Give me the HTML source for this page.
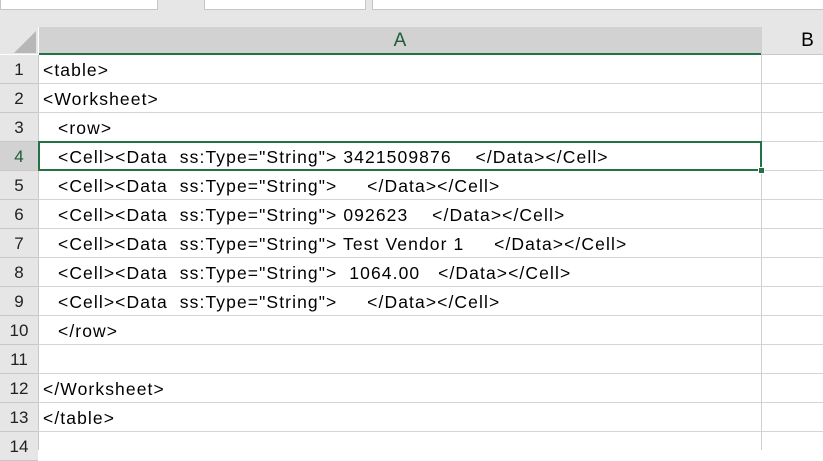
<!DOCTYPE html><html><head><style>
body{margin:0;width:823px;height:450px;overflow:hidden;background:#fff;font-family:"Liberation Sans",Calibri,sans-serif;position:relative}
div{position:absolute;box-sizing:border-box}
.t{font-size:17.5px;letter-spacing:1.1px;color:#000;white-space:pre;line-height:29px}
.rn{left:0;width:38px;text-align:center;font-size:17px;line-height:29px;color:#222;background:#e6e6e6;border-bottom:1px solid #c8c8c8}
.hl{left:38px;width:785px;height:1px;background:#d4d4d4}
</style></head><body>
<div style="left:0;top:0;width:823px;height:27px;background:#e6e6e6"></div>
<div style="left:0;top:-2px;width:158px;height:12px;background:#fff;border:1px solid #c6c6c6"></div>
<div style="left:204px;top:-2px;width:162px;height:12px;background:#fff;border:1px solid #c6c6c6"></div>
<div style="left:372px;top:-2px;width:460px;height:12px;background:#fff;border:1px solid #c6c6c6"></div>
<div style="left:0;top:27px;width:38px;height:27px;background:#e6e6e6"></div>
<svg style="position:absolute;left:14px;top:31px" width="22" height="22"><polygon points="22,0 22,22 0,22" fill="#b7b7b7"/></svg>
<div style="left:39px;top:27px;width:722px;height:28px;background:#d2d2d2;border-bottom:2px solid #217346;text-align:center;font-size:19px;line-height:28px;color:#1e5b38">A</div>
<div style="left:762px;top:27px;width:61px;height:28px;background:#e6e6e6;border-bottom:1px solid #c8c8c8;text-align:center;font-size:19px;line-height:28px;padding-left:30px">B</div>
<div style="left:761px;top:27px;width:1px;height:423px;background:#d0d0d0"></div>
<div style="left:38px;top:55px;width:1px;height:395px;background:#c8c8c8"></div>
<div class="rn" style="top:55px;height:29px">1</div>
<div class="rn" style="top:84px;height:29px">2</div>
<div class="rn" style="top:113px;height:29px">3</div>
<div class="rn" style="top:142px;height:29px;background:#d2d2d2;color:#1e5b38">4</div>
<div class="rn" style="top:171px;height:29px">5</div>
<div class="rn" style="top:200px;height:29px">6</div>
<div class="rn" style="top:229px;height:29px">7</div>
<div class="rn" style="top:258px;height:29px">8</div>
<div class="rn" style="top:287px;height:29px">9</div>
<div class="rn" style="top:316px;height:29px">10</div>
<div class="rn" style="top:345px;height:29px">11</div>
<div class="rn" style="top:374px;height:29px">12</div>
<div class="rn" style="top:403px;height:29px">13</div>
<div class="rn" style="top:432px;height:29px">14</div>
<div class="hl" style="top:83px"></div><div class="hl" style="top:112px"></div><div class="hl" style="top:141px"></div><div class="hl" style="top:170px"></div><div class="hl" style="top:199px"></div><div class="hl" style="top:228px"></div><div class="hl" style="top:257px"></div><div class="hl" style="top:286px"></div><div class="hl" style="top:315px"></div><div class="hl" style="top:344px"></div><div class="hl" style="top:373px"></div><div class="hl" style="top:402px"></div><div class="hl" style="top:431px"></div>
<div class="t" style="left:43px;top:56px">&lt;table&gt;</div>
<div class="t" style="left:43px;top:85px">&lt;Worksheet&gt;</div>
<div class="t" style="left:58px;top:114px">&lt;row&gt;</div>
<div class="t" style="left:58px;top:143px">&lt;Cell&gt;&lt;Data  ss:Type="String"&gt; 3421509876    &lt;/Data&gt;&lt;/Cell&gt;</div>
<div class="t" style="left:58px;top:172px">&lt;Cell&gt;&lt;Data  ss:Type="String"&gt;     &lt;/Data&gt;&lt;/Cell&gt;</div>
<div class="t" style="left:58px;top:201px">&lt;Cell&gt;&lt;Data  ss:Type="String"&gt; 092623    &lt;/Data&gt;&lt;/Cell&gt;</div>
<div class="t" style="left:58px;top:230px">&lt;Cell&gt;&lt;Data  ss:Type="String"&gt; Test Vendor 1     &lt;/Data&gt;&lt;/Cell&gt;</div>
<div class="t" style="left:58px;top:259px">&lt;Cell&gt;&lt;Data  ss:Type="String"&gt;  1064.00   &lt;/Data&gt;&lt;/Cell&gt;</div>
<div class="t" style="left:58px;top:288px">&lt;Cell&gt;&lt;Data  ss:Type="String"&gt;     &lt;/Data&gt;&lt;/Cell&gt;</div>
<div class="t" style="left:58px;top:317px">&lt;/row&gt;</div>
<div class="t" style="left:43px;top:375px">&lt;/Worksheet&gt;</div>
<div class="t" style="left:43px;top:404px">&lt;/table&gt;</div>
<div style="left:38px;top:141px;width:724px;height:30px;border:2px solid #217346"></div>
<div style="left:758px;top:167px;width:7px;height:7px;background:#217346;border:1px solid #fff"></div>
</body></html>
